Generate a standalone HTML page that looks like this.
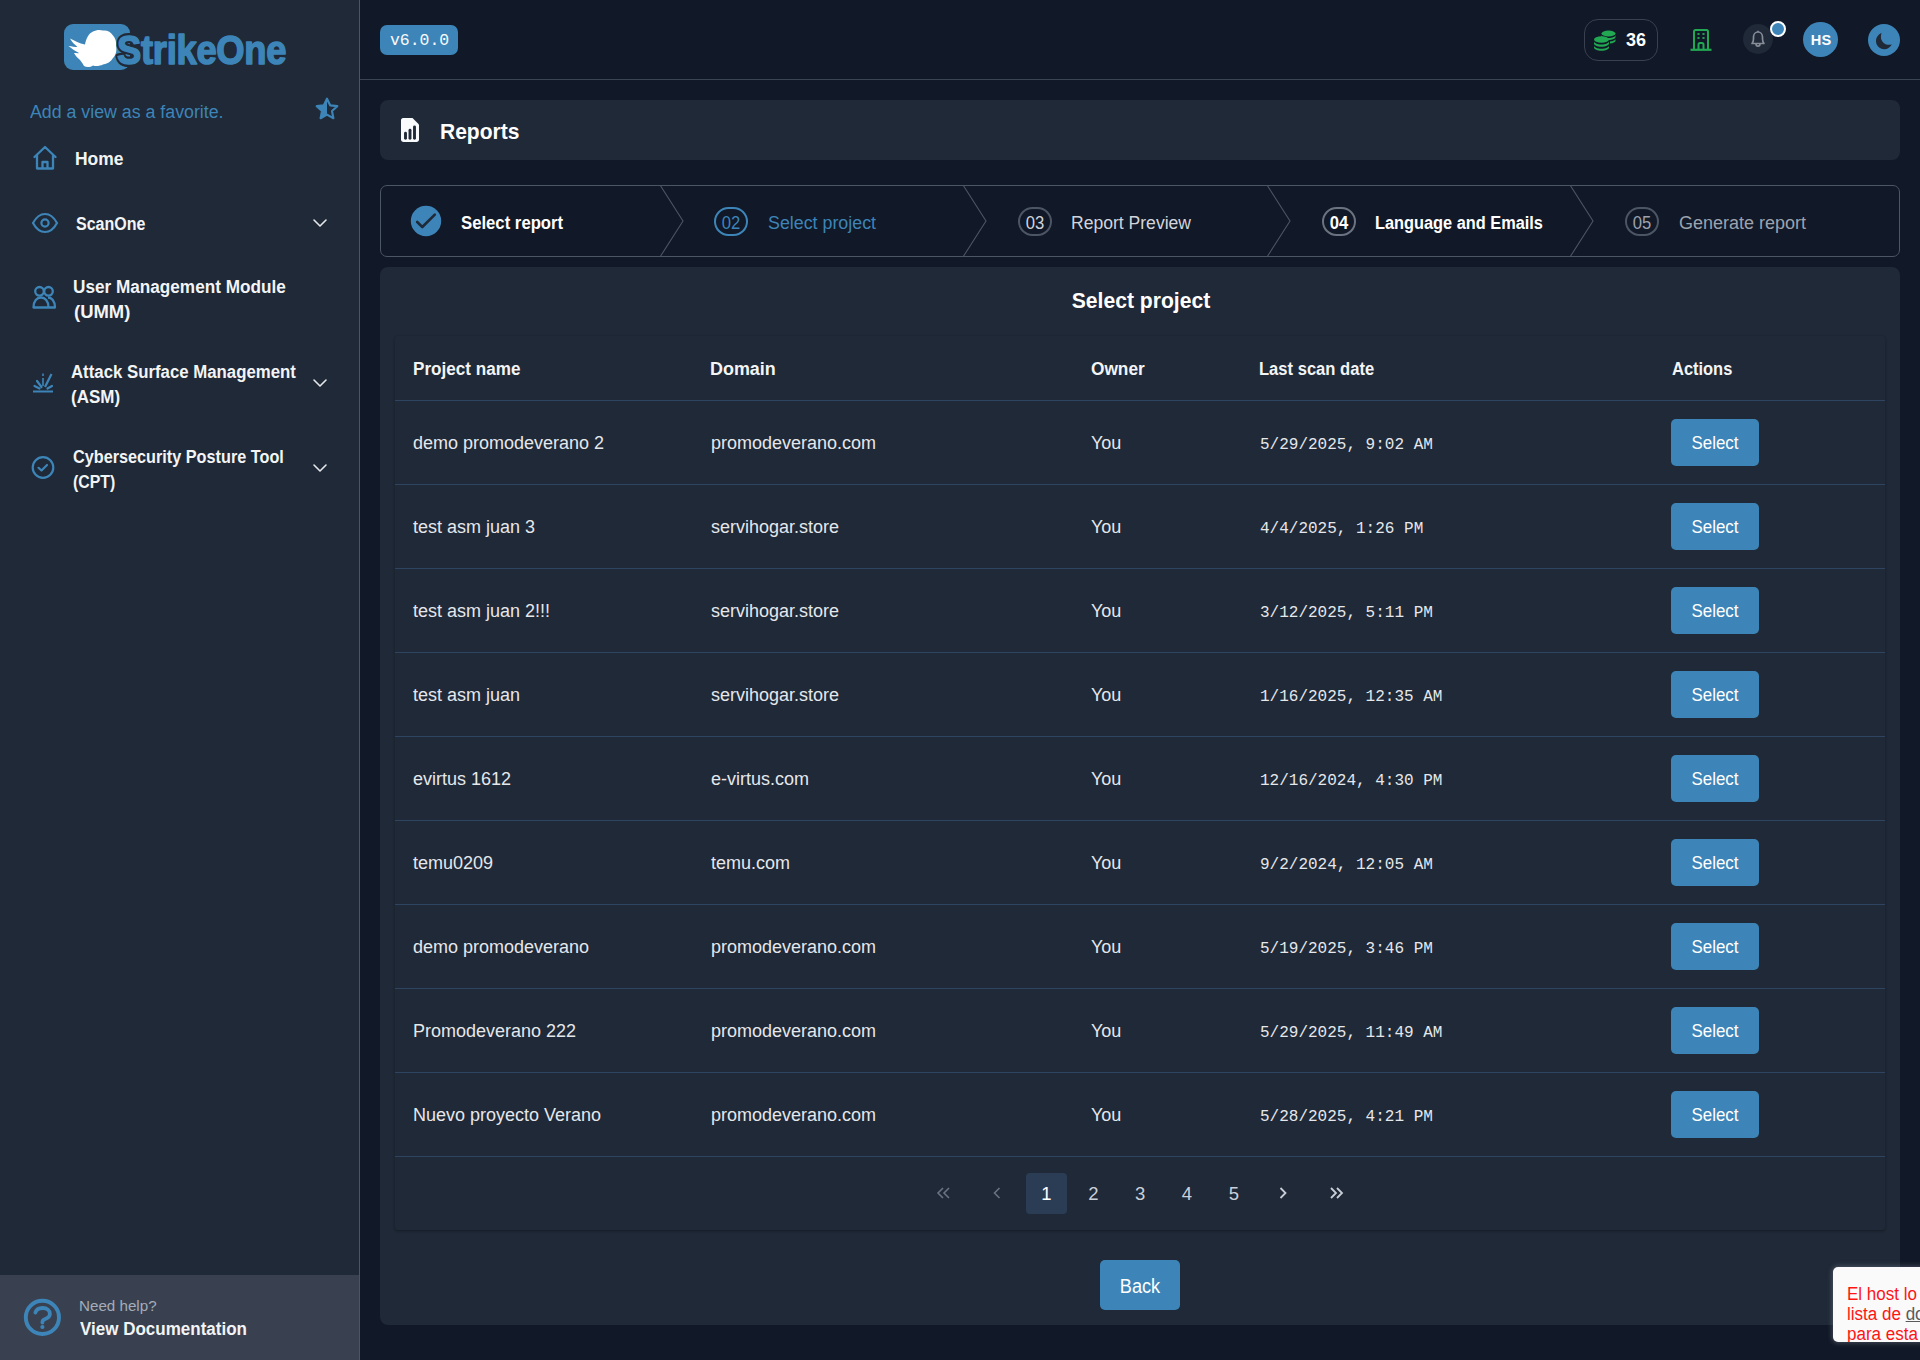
<!DOCTYPE html><html><head><meta charset="utf-8"><title>StrikeOne Reports</title><style>
html,body{margin:0;padding:0;}
body{width:1920px;height:1360px;overflow:hidden;background:#111827;position:relative;font-family:"Liberation Sans",sans-serif;}
.t{position:absolute;white-space:nowrap;}
.b{position:absolute;box-sizing:border-box;}
</style></head><body>
<div class="b" style="left:0px;top:0px;width:360px;height:1360px;background:#1f2937;border-right:1px solid #4b5563;"></div>
<svg class="b" style="left:60px;top:18px;" width="235" height="60" viewBox="0 0 235 60">
<rect x="4" y="6" width="66" height="46" rx="9" fill="#3d85b8"/>
<path d="M10 20.5 C15 23 19 25.5 25 26.5 C26 21 28.5 15.5 33 13.5 C36 11.8 40 11.5 43 12.5 C47 12 51 14 53 17.5 C55.5 20 56.5 24 56 28 C57 32 56 37 53 40 C51 43.5 47 46 43 46.5 C40 48 36 48.5 33 47.5 C30 49.5 26.5 49.5 24 48 C22.5 45 21 43 19 41 C17 39.5 15 37 14 35 C16 35 18 35.5 19 35 C15.5 33 12 31 8.5 28 C12 28.5 15 29 17.5 29 C14.5 26.5 12 24 10 20.5 Z" fill="#fff"/>
<g transform="translate(57 0) scale(0.875 1) translate(-57 0)" font-family="Liberation Sans" font-weight="700" font-size="41.5" letter-spacing="-0.3">
<text x="57" y="45.8" fill="#3d85b8" stroke="#1f2937" stroke-width="6" stroke-linejoin="round">StrikeOne</text>
<text x="57" y="45.8" fill="#3d85b8" stroke="#3d85b8" stroke-width="1.6" stroke-linejoin="round">StrikeOne</text>
</g>
</svg>
<div class="t" style="left:30.00px;top:92px;font-size:18px;line-height:40px;font-weight:400;color:#3d85b8;font-family:'Liberation Sans', sans-serif;transform:scaleX(0.9867);transform-origin:0 0;">Add a view as a favorite.</div>
<svg class="b" style="left:314px;top:96px;" width="26" height="26" viewBox="0 0 24 24"><path d="M12 2.5 L14.9 8.6 L21.5 9.4 L16.6 13.9 L17.9 20.5 L12 17.2 L6.1 20.5 L7.4 13.9 L2.5 9.4 L9.1 8.6 Z" fill="none" stroke="#3d85b8" stroke-width="2" stroke-linejoin="round"/><path d="M12 2.5 L9.1 8.6 L2.5 9.4 L7.4 13.9 L6.1 20.5 L12 17.2 Z" fill="#3d85b8"/></svg>
<svg class="b" style="left:31px;top:144px;" width="28" height="28" viewBox="0 0 28 28"><path d="M3.5 13 L14 3 L24.5 13 M6 11 V24.5 H22 V11 M11.5 24.5 V18 H16.5 V24.5" fill="none" stroke="#3d85b8" stroke-width="2.3" stroke-linejoin="round" stroke-linecap="round"/></svg>
<div class="t" style="left:74.73px;top:139px;font-size:18px;line-height:40px;font-weight:700;color:#f3f4f6;font-family:'Liberation Sans', sans-serif;transform:scaleX(0.9694);transform-origin:0 0;">Home</div>
<svg class="b" style="left:31px;top:211px;" width="28" height="24" viewBox="0 0 28 24"><path d="M2 12 C5.5 5.5 9.5 3 14 3 C18.5 3 22.5 5.5 26 12 C22.5 18.5 18.5 21 14 21 C9.5 21 5.5 18.5 2 12 Z" fill="none" stroke="#3d85b8" stroke-width="2.2"/><circle cx="14" cy="12" r="3.6" fill="none" stroke="#3d85b8" stroke-width="2.2"/></svg>
<div class="t" style="left:75.70px;top:204px;font-size:18px;line-height:40px;font-weight:700;color:#f3f4f6;font-family:'Liberation Sans', sans-serif;transform:scaleX(0.8908);transform-origin:0 0;">ScanOne</div>
<svg class="b" style="left:312px;top:217.7px;" width="16" height="10" viewBox="0 0 16 10"><path d="M2 2 L8 8 L14 2" fill="none" stroke="#e5e7eb" stroke-width="1.6" stroke-linecap="round" stroke-linejoin="round"/></svg>
<svg class="b" style="left:30px;top:283px;" width="28" height="28" viewBox="0 0 28 28"><circle cx="9.5" cy="8.3" r="4.3" fill="none" stroke="#3d85b8" stroke-width="2.3"/><circle cx="18.5" cy="8.3" r="4.3" fill="none" stroke="#3d85b8" stroke-width="2.3"/><path d="M3.5 24.5 C3.5 18 7 14.5 11 14.5 C15 14.5 18.5 18 18.5 24.5 Z M18 14.5 C21.5 14.5 25 18 25 24.5 H18.5" fill="none" stroke="#3d85b8" stroke-width="2.3" stroke-linejoin="round"/></svg>
<div class="t" style="left:72.77px;top:267px;font-size:17.5px;line-height:40px;font-weight:700;color:#f3f4f6;font-family:'Liberation Sans', sans-serif;transform:scaleX(0.9810);transform-origin:0 0;">User Management Module</div>
<div class="t" style="left:73.75px;top:292px;font-size:17.5px;line-height:40px;font-weight:700;color:#f3f4f6;font-family:'Liberation Sans', sans-serif;transform:scaleX(1.0547);transform-origin:0 0;">(UMM)</div>
<svg class="b" style="left:31px;top:372px;" width="24" height="21" viewBox="0 0 24 21"><path d="M2 19.5 H22" stroke="#3d85b8" stroke-width="2"/><path d="M12 1.5 V4 M12 6 V14" stroke="#3d85b8" stroke-width="1.6"/><path d="M20.5 2 L14 15" stroke="#3d85b8" stroke-width="2.2"/><path d="M6 9 L10.5 15 M3.5 14 L8.5 16.5 M16.5 16.5 L21 14" stroke="#3d85b8" stroke-width="2.2" stroke-linecap="round"/></svg>
<div class="t" style="left:71.25px;top:352px;font-size:17.5px;line-height:40px;font-weight:700;color:#f3f4f6;font-family:'Liberation Sans', sans-serif;transform:scaleX(0.9593);transform-origin:0 0;">Attack Surface Management</div>
<div class="t" style="left:71.25px;top:377px;font-size:17.5px;line-height:40px;font-weight:700;color:#f3f4f6;font-family:'Liberation Sans', sans-serif;transform:scaleX(0.9705);transform-origin:0 0;">(ASM)</div>
<svg class="b" style="left:312px;top:377.7px;" width="16" height="10" viewBox="0 0 16 10"><path d="M2 2 L8 8 L14 2" fill="none" stroke="#e5e7eb" stroke-width="1.6" stroke-linecap="round" stroke-linejoin="round"/></svg>
<svg class="b" style="left:30px;top:455px;" width="26" height="26" viewBox="0 0 26 26"><circle cx="13" cy="12.5" r="10.3" fill="none" stroke="#3d85b8" stroke-width="2.2"/><path d="M8.5 12.8 L11.5 15.5 L17 10" fill="none" stroke="#3d85b8" stroke-width="2.2" stroke-linecap="round" stroke-linejoin="round"/></svg>
<div class="t" style="left:73.00px;top:437px;font-size:17.5px;line-height:40px;font-weight:700;color:#f3f4f6;font-family:'Liberation Sans', sans-serif;transform:scaleX(0.9277);transform-origin:0 0;">Cybersecurity Posture Tool</div>
<div class="t" style="left:73.00px;top:462px;font-size:17.5px;line-height:40px;font-weight:700;color:#f3f4f6;font-family:'Liberation Sans', sans-serif;transform:scaleX(0.9056);transform-origin:0 0;">(CPT)</div>
<svg class="b" style="left:312px;top:462.7px;" width="16" height="10" viewBox="0 0 16 10"><path d="M2 2 L8 8 L14 2" fill="none" stroke="#e5e7eb" stroke-width="1.6" stroke-linecap="round" stroke-linejoin="round"/></svg>
<div class="b" style="left:0px;top:1275px;width:359px;height:85px;background:#394150;"></div>
<svg class="b" style="left:22px;top:1297px;" width="41" height="41" viewBox="0 0 41 41"><circle cx="20.4" cy="20.4" r="16.6" fill="none" stroke="#3d85b8" stroke-width="3.9"/><path d="M13.4 15.6 C14.2 12.6 17 11 20.6 11 C25 11 27.9 13.6 27.9 17 C27.9 20.4 24.6 21.6 22.2 22.5 C20.9 23 20.4 24 20.4 25.6" fill="none" stroke="#3d85b8" stroke-width="3.8" stroke-linecap="round"/><circle cx="20.4" cy="30" r="2.1" fill="#3d85b8"/></svg>
<div class="t" style="left:79.02px;top:1286px;font-size:15.5px;line-height:40px;font-weight:400;color:#a5acb8;font-family:'Liberation Sans', sans-serif;transform:scaleX(0.9788);transform-origin:0 0;">Need help?</div>
<div class="t" style="left:80.00px;top:1309px;font-size:18px;line-height:40px;font-weight:700;color:#f3f4f6;font-family:'Liberation Sans', sans-serif;transform:scaleX(0.9448);transform-origin:0 0;">View Documentation</div>
<div class="b" style="left:360px;top:0px;width:1560px;height:80px;border-bottom:1px solid #3b4452;"></div>
<div class="b" style="left:380px;top:25px;width:78px;height:30px;background:#3d85b8;border-radius:7px;"></div>
<div class="t" style="left:390.00px;top:21px;font-size:16px;line-height:40px;font-weight:400;color:#f9fafb;font-family:'Liberation Mono', monospace;transform:scaleX(1.0262);transform-origin:0 0;">v6.0.0</div>
<div class="b" style="left:1584px;top:19px;width:74px;height:42px;border:1px solid #394150;border-radius:14px;"></div>
<svg class="b" style="left:1593px;top:28px;" width="24" height="24" viewBox="0 0 24 24"><g fill="#22a852"><ellipse cx="15.5" cy="5.5" rx="7" ry="3"/><path d="M8.5 7 V9 C8.5 10.6 11.6 12 15.5 12 C19.4 12 22.5 10.6 22.5 9 V7 C22.5 8.6 19.4 10 15.5 10 C11.6 10 8.5 8.6 8.5 7Z"/><path d="M17 13.5 C19.6 13.2 22.5 12.2 22.5 11 V13 C22.5 14.2 20 15.2 17 15.5Z"/><ellipse cx="8.5" cy="11.5" rx="7.5" ry="3.3"/><path d="M1 13.3 V15.5 C1 17.3 4.4 18.8 8.5 18.8 C12.6 18.8 16 17.3 16 15.5 V13.3 C16 15.1 12.6 16.6 8.5 16.6 C4.4 16.6 1 15.1 1 13.3Z"/><path d="M1 17.5 V19.5 C1 21.3 4.4 22.8 8.5 22.8 C12.6 22.8 16 21.3 16 19.5 V17.5 C16 19.3 12.6 20.8 8.5 20.8 C4.4 20.8 1 19.3 1 17.5Z"/></g></svg>
<div class="t" style="left:1626.00px;top:20px;font-size:18px;line-height:40px;font-weight:700;color:#ffffff;font-family:'Liberation Sans', sans-serif;transform:scaleX(0.9995);transform-origin:0 0;">36</div>
<svg class="b" style="left:1689px;top:28px;" width="24" height="24" viewBox="0 0 24 24"><g fill="none" stroke="#22a852" stroke-width="2"><path d="M5 22 V3.5 C5 2.7 5.6 2 6.5 2 H17.5 C18.4 2 19 2.7 19 3.5 V22"/><path d="M1.5 21.8 H22.5" stroke-width="2.2"/><path d="M9.5 22 V16.5 C9.5 15.7 10.2 15 11 15 H13 C13.8 15 14.5 15.7 14.5 16.5 V22"/></g><g fill="#22a852"><ellipse cx="9.5" cy="6" rx="1.3" ry="0.9"/><ellipse cx="14.5" cy="6" rx="1.3" ry="0.9"/><ellipse cx="9.5" cy="10" rx="1.3" ry="0.9"/><ellipse cx="14.5" cy="10" rx="1.3" ry="0.9"/></g></svg>
<div class="b" style="left:1743px;top:24px;width:30px;height:30px;background:#1f2937;border-radius:50%;"></div>
<svg class="b" style="left:1748px;top:29px;" width="20" height="20" viewBox="0 0 20 20"><path d="M4 14.5 C5 13.5 5.5 12 5.5 10 V8 C5.5 5.3 7.5 3 10 3 C12.5 3 14.5 5.3 14.5 8 V10 C14.5 12 15 13.5 16 14.5 Z M8 14.8 C8 16.2 8.9 17.2 10 17.2 C11.1 17.2 12 16.2 12 14.8 M10 1.8 V3" fill="none" stroke="#868c98" stroke-width="1.7" stroke-linejoin="round"/></svg>
<div class="b" style="left:1770px;top:21px;width:16px;height:16px;background:#3d85b8;border:2.5px solid #ffffff;border-radius:50%;"></div>
<div class="b" style="left:1803px;top:22px;width:35px;height:35px;background:#3d85b8;border-radius:50%;"></div>
<div class="t" style="left:1620.7px;width:400px;text-align:center;top:20px;font-size:15.5px;line-height:40px;font-weight:700;color:#ffffff;font-family:'Liberation Sans', sans-serif;transform:scaleX(0.9409);transform-origin:50% 0;">HS</div>
<div class="b" style="left:1868px;top:24px;width:32px;height:32px;background:#3d85b8;border-radius:50%;"></div>
<svg class="b" style="left:1874px;top:30.5px;" width="20" height="20" viewBox="0 0 20 20"><path d="M7.5 2 C4.3 3.3 2 6.4 2 10 C2 14.6 5.6 18.2 10.2 18.2 C13.6 18.2 16.5 16.1 17.8 13.2 C16.8 13.6 15.8 13.8 14.7 13.8 C10.4 13.8 6.9 10.3 6.9 6 C6.9 4.6 7.1 3.2 7.5 2 Z" fill="#1f2937"/></svg>
<div class="b" style="left:380px;top:100px;width:1520px;height:60px;background:#1f2937;border-radius:8px;"></div>
<svg class="b" style="left:400px;top:117px;" width="20" height="26" viewBox="0 0 20 26"><path d="M3 1 H12.5 L19 7.5 V22.5 C19 24 18 25 16.5 25 H3.5 C2 25 1 24 1 22.5 V3 C1 2 2 1 3 1 Z" fill="#f8fafc"/><g stroke="#1f2937" stroke-width="2.9" stroke-linecap="round"><path d="M5.5 16.2 V21.2"/><path d="M10 13.2 V21.2"/><path d="M14.5 10 V21.2"/></g></svg>
<div class="t" style="left:440.32px;top:112px;font-size:22.5px;line-height:40px;font-weight:700;color:#ffffff;font-family:'Liberation Sans', sans-serif;transform:scaleX(0.9341);transform-origin:0 0;">Reports</div>
<div class="b" style="left:380px;top:185px;width:1520px;height:72px;border:1px solid #4b5563;border-radius:7px;"></div>
<svg class="b" style="left:380px;top:185px;" width="1520" height="72" viewBox="0 0 1520 72"><path d="M280 0 L303 36 L280 72" fill="none" stroke="#4b5563" stroke-width="1.1"/><path d="M583 0 L606 36 L583 72" fill="none" stroke="#4b5563" stroke-width="1.1"/><path d="M887 0 L910 36 L887 72" fill="none" stroke="#4b5563" stroke-width="1.1"/><path d="M1190 0 L1213 36 L1190 72" fill="none" stroke="#4b5563" stroke-width="1.1"/></svg>
<svg class="b" style="left:410px;top:205px;" width="32" height="32" viewBox="0 0 32 32"><circle cx="16" cy="16" r="15.2" fill="#3d85b8"/><path d="M7.2 17 L12.3 22 L24.8 9.6" fill="none" stroke="#1f2937" stroke-width="2.6" stroke-linecap="round" stroke-linejoin="round"/></svg>
<div class="t" style="left:461.00px;top:203px;font-size:18.5px;line-height:40px;font-weight:700;color:#ffffff;font-family:'Liberation Sans', sans-serif;transform:scaleX(0.9032);transform-origin:0 0;">Select report</div>
<div class="b" style="left:714px;top:207px;width:34px;height:29px;border:2px solid #3d85b8;border-radius:14.5px;"></div>
<div class="t" style="left:531px;width:400px;text-align:center;top:203px;font-size:18px;line-height:40px;font-weight:400;color:#3d85b8;font-family:'Liberation Sans', sans-serif;transform:scaleX(0.9245);transform-origin:50% 0;">02</div>
<div class="t" style="left:768.30px;top:203px;font-size:18px;line-height:40px;font-weight:400;color:#3d85b8;font-family:'Liberation Sans', sans-serif;transform:scaleX(0.9903);transform-origin:0 0;">Select project</div>
<div class="b" style="left:1018px;top:207px;width:34px;height:29px;border:2px solid #4b5563;border-radius:14.5px;"></div>
<div class="t" style="left:835px;width:400px;text-align:center;top:203px;font-size:18px;line-height:40px;font-weight:400;color:#d1d5db;font-family:'Liberation Sans', sans-serif;transform:scaleX(0.9245);transform-origin:50% 0;">03</div>
<div class="t" style="left:1071.02px;top:203px;font-size:18px;line-height:40px;font-weight:400;color:#d1d5db;font-family:'Liberation Sans', sans-serif;transform:scaleX(0.9752);transform-origin:0 0;">Report Preview</div>
<div class="b" style="left:1322px;top:207px;width:34px;height:29px;border:2px solid #6b7280;border-radius:14.5px;"></div>
<div class="t" style="left:1139px;width:400px;text-align:center;top:203px;font-size:18px;line-height:40px;font-weight:700;color:#ffffff;font-family:'Liberation Sans', sans-serif;transform:scaleX(0.9245);transform-origin:50% 0;">04</div>
<div class="t" style="left:1375.09px;top:203px;font-size:18px;line-height:40px;font-weight:700;color:#ffffff;font-family:'Liberation Sans', sans-serif;transform:scaleX(0.9074);transform-origin:0 0;">Language and Emails</div>
<div class="b" style="left:1625px;top:207px;width:34px;height:29px;border:2px solid #4b5563;border-radius:14.5px;"></div>
<div class="t" style="left:1442px;width:400px;text-align:center;top:203px;font-size:18px;line-height:40px;font-weight:400;color:#9ca3af;font-family:'Liberation Sans', sans-serif;transform:scaleX(0.9245);transform-origin:50% 0;">05</div>
<div class="t" style="left:1679.00px;top:203px;font-size:18px;line-height:40px;font-weight:400;color:#9ca3af;font-family:'Liberation Sans', sans-serif;transform:scaleX(0.9994);transform-origin:0 0;">Generate report</div>
<div class="b" style="left:380px;top:267px;width:1520px;height:1058px;background:#1f2937;border-radius:8px;"></div>
<div class="t" style="left:940.5px;width:400px;text-align:center;top:281px;font-size:22.5px;line-height:40px;font-weight:700;color:#ffffff;font-family:'Liberation Sans', sans-serif;transform:scaleX(0.9388);transform-origin:50% 0;">Select project</div>
<div class="b" style="left:395px;top:336px;width:1490px;height:894px;background:#1f2937;box-shadow:0 1px 3px rgba(0,0,0,0.22),0 1px 2px rgba(0,0,0,0.12);border-radius:3px;"></div>
<div class="t" style="left:412.55px;top:349px;font-size:18px;line-height:40px;font-weight:700;color:#f3f4f6;font-family:'Liberation Sans', sans-serif;transform:scaleX(0.9506);transform-origin:0 0;">Project name</div>
<div class="t" style="left:710.25px;top:349px;font-size:18px;line-height:40px;font-weight:700;color:#f3f4f6;font-family:'Liberation Sans', sans-serif;transform:scaleX(0.9959);transform-origin:0 0;">Domain</div>
<div class="t" style="left:1090.75px;top:349px;font-size:18px;line-height:40px;font-weight:700;color:#f3f4f6;font-family:'Liberation Sans', sans-serif;transform:scaleX(0.9597);transform-origin:0 0;">Owner</div>
<div class="t" style="left:1259.28px;top:349px;font-size:18px;line-height:40px;font-weight:700;color:#f3f4f6;font-family:'Liberation Sans', sans-serif;transform:scaleX(0.9207);transform-origin:0 0;">Last scan date</div>
<div class="t" style="left:1671.70px;top:349px;font-size:18px;line-height:40px;font-weight:700;color:#f3f4f6;font-family:'Liberation Sans', sans-serif;transform:scaleX(0.9137);transform-origin:0 0;">Actions</div>
<div class="b" style="left:395px;top:400px;width:1490px;height:1px;background:#2e4461;"></div>
<div class="b" style="left:395px;top:484px;width:1490px;height:1px;background:#2e4461;"></div>
<div class="b" style="left:395px;top:568px;width:1490px;height:1px;background:#2e4461;"></div>
<div class="b" style="left:395px;top:652px;width:1490px;height:1px;background:#2e4461;"></div>
<div class="b" style="left:395px;top:736px;width:1490px;height:1px;background:#2e4461;"></div>
<div class="b" style="left:395px;top:820px;width:1490px;height:1px;background:#2e4461;"></div>
<div class="b" style="left:395px;top:904px;width:1490px;height:1px;background:#2e4461;"></div>
<div class="b" style="left:395px;top:988px;width:1490px;height:1px;background:#2e4461;"></div>
<div class="b" style="left:395px;top:1072px;width:1490px;height:1px;background:#2e4461;"></div>
<div class="b" style="left:395px;top:1156px;width:1490px;height:1px;background:#2e4461;"></div>
<div class="t" style="left:413px;top:423px;font-size:18px;line-height:40px;font-weight:400;color:#e5e7eb;font-family:'Liberation Sans', sans-serif;">demo promodeverano 2</div>
<div class="t" style="left:711px;top:423px;font-size:18px;line-height:40px;font-weight:400;color:#e5e7eb;font-family:'Liberation Sans', sans-serif;">promodeverano.com</div>
<div class="t" style="left:1091px;top:423px;font-size:18px;line-height:40px;font-weight:400;color:#e5e7eb;font-family:'Liberation Sans', sans-serif;">You</div>
<div class="t" style="left:1260px;top:425px;font-size:16px;line-height:40px;font-weight:400;color:#e5e7eb;font-family:'Liberation Mono', monospace;">5/29/2025, 9:02 AM</div>
<div class="b" style="left:1671px;top:419px;width:88px;height:47px;background:#3d85b8;border-radius:5px;"></div>
<div class="t" style="left:1515.4px;width:400px;text-align:center;top:423px;font-size:18px;line-height:40px;font-weight:400;color:#ffffff;font-family:'Liberation Sans', sans-serif;transform:scaleX(0.9395);transform-origin:50% 0;">Select</div>
<div class="t" style="left:413px;top:507px;font-size:18px;line-height:40px;font-weight:400;color:#e5e7eb;font-family:'Liberation Sans', sans-serif;">test asm juan 3</div>
<div class="t" style="left:711px;top:507px;font-size:18px;line-height:40px;font-weight:400;color:#e5e7eb;font-family:'Liberation Sans', sans-serif;">servihogar.store</div>
<div class="t" style="left:1091px;top:507px;font-size:18px;line-height:40px;font-weight:400;color:#e5e7eb;font-family:'Liberation Sans', sans-serif;">You</div>
<div class="t" style="left:1260px;top:509px;font-size:16px;line-height:40px;font-weight:400;color:#e5e7eb;font-family:'Liberation Mono', monospace;">4/4/2025, 1:26 PM</div>
<div class="b" style="left:1671px;top:503px;width:88px;height:47px;background:#3d85b8;border-radius:5px;"></div>
<div class="t" style="left:1515.4px;width:400px;text-align:center;top:507px;font-size:18px;line-height:40px;font-weight:400;color:#ffffff;font-family:'Liberation Sans', sans-serif;transform:scaleX(0.9395);transform-origin:50% 0;">Select</div>
<div class="t" style="left:413px;top:591px;font-size:18px;line-height:40px;font-weight:400;color:#e5e7eb;font-family:'Liberation Sans', sans-serif;">test asm juan 2!!!</div>
<div class="t" style="left:711px;top:591px;font-size:18px;line-height:40px;font-weight:400;color:#e5e7eb;font-family:'Liberation Sans', sans-serif;">servihogar.store</div>
<div class="t" style="left:1091px;top:591px;font-size:18px;line-height:40px;font-weight:400;color:#e5e7eb;font-family:'Liberation Sans', sans-serif;">You</div>
<div class="t" style="left:1260px;top:593px;font-size:16px;line-height:40px;font-weight:400;color:#e5e7eb;font-family:'Liberation Mono', monospace;">3/12/2025, 5:11 PM</div>
<div class="b" style="left:1671px;top:587px;width:88px;height:47px;background:#3d85b8;border-radius:5px;"></div>
<div class="t" style="left:1515.4px;width:400px;text-align:center;top:591px;font-size:18px;line-height:40px;font-weight:400;color:#ffffff;font-family:'Liberation Sans', sans-serif;transform:scaleX(0.9395);transform-origin:50% 0;">Select</div>
<div class="t" style="left:413px;top:675px;font-size:18px;line-height:40px;font-weight:400;color:#e5e7eb;font-family:'Liberation Sans', sans-serif;">test asm juan</div>
<div class="t" style="left:711px;top:675px;font-size:18px;line-height:40px;font-weight:400;color:#e5e7eb;font-family:'Liberation Sans', sans-serif;">servihogar.store</div>
<div class="t" style="left:1091px;top:675px;font-size:18px;line-height:40px;font-weight:400;color:#e5e7eb;font-family:'Liberation Sans', sans-serif;">You</div>
<div class="t" style="left:1260px;top:677px;font-size:16px;line-height:40px;font-weight:400;color:#e5e7eb;font-family:'Liberation Mono', monospace;">1/16/2025, 12:35 AM</div>
<div class="b" style="left:1671px;top:671px;width:88px;height:47px;background:#3d85b8;border-radius:5px;"></div>
<div class="t" style="left:1515.4px;width:400px;text-align:center;top:675px;font-size:18px;line-height:40px;font-weight:400;color:#ffffff;font-family:'Liberation Sans', sans-serif;transform:scaleX(0.9395);transform-origin:50% 0;">Select</div>
<div class="t" style="left:413px;top:759px;font-size:18px;line-height:40px;font-weight:400;color:#e5e7eb;font-family:'Liberation Sans', sans-serif;">evirtus 1612</div>
<div class="t" style="left:711px;top:759px;font-size:18px;line-height:40px;font-weight:400;color:#e5e7eb;font-family:'Liberation Sans', sans-serif;">e-virtus.com</div>
<div class="t" style="left:1091px;top:759px;font-size:18px;line-height:40px;font-weight:400;color:#e5e7eb;font-family:'Liberation Sans', sans-serif;">You</div>
<div class="t" style="left:1260px;top:761px;font-size:16px;line-height:40px;font-weight:400;color:#e5e7eb;font-family:'Liberation Mono', monospace;">12/16/2024, 4:30 PM</div>
<div class="b" style="left:1671px;top:755px;width:88px;height:47px;background:#3d85b8;border-radius:5px;"></div>
<div class="t" style="left:1515.4px;width:400px;text-align:center;top:759px;font-size:18px;line-height:40px;font-weight:400;color:#ffffff;font-family:'Liberation Sans', sans-serif;transform:scaleX(0.9395);transform-origin:50% 0;">Select</div>
<div class="t" style="left:413px;top:843px;font-size:18px;line-height:40px;font-weight:400;color:#e5e7eb;font-family:'Liberation Sans', sans-serif;">temu0209</div>
<div class="t" style="left:711px;top:843px;font-size:18px;line-height:40px;font-weight:400;color:#e5e7eb;font-family:'Liberation Sans', sans-serif;">temu.com</div>
<div class="t" style="left:1091px;top:843px;font-size:18px;line-height:40px;font-weight:400;color:#e5e7eb;font-family:'Liberation Sans', sans-serif;">You</div>
<div class="t" style="left:1260px;top:845px;font-size:16px;line-height:40px;font-weight:400;color:#e5e7eb;font-family:'Liberation Mono', monospace;">9/2/2024, 12:05 AM</div>
<div class="b" style="left:1671px;top:839px;width:88px;height:47px;background:#3d85b8;border-radius:5px;"></div>
<div class="t" style="left:1515.4px;width:400px;text-align:center;top:843px;font-size:18px;line-height:40px;font-weight:400;color:#ffffff;font-family:'Liberation Sans', sans-serif;transform:scaleX(0.9395);transform-origin:50% 0;">Select</div>
<div class="t" style="left:413px;top:927px;font-size:18px;line-height:40px;font-weight:400;color:#e5e7eb;font-family:'Liberation Sans', sans-serif;">demo promodeverano</div>
<div class="t" style="left:711px;top:927px;font-size:18px;line-height:40px;font-weight:400;color:#e5e7eb;font-family:'Liberation Sans', sans-serif;">promodeverano.com</div>
<div class="t" style="left:1091px;top:927px;font-size:18px;line-height:40px;font-weight:400;color:#e5e7eb;font-family:'Liberation Sans', sans-serif;">You</div>
<div class="t" style="left:1260px;top:929px;font-size:16px;line-height:40px;font-weight:400;color:#e5e7eb;font-family:'Liberation Mono', monospace;">5/19/2025, 3:46 PM</div>
<div class="b" style="left:1671px;top:923px;width:88px;height:47px;background:#3d85b8;border-radius:5px;"></div>
<div class="t" style="left:1515.4px;width:400px;text-align:center;top:927px;font-size:18px;line-height:40px;font-weight:400;color:#ffffff;font-family:'Liberation Sans', sans-serif;transform:scaleX(0.9395);transform-origin:50% 0;">Select</div>
<div class="t" style="left:413px;top:1011px;font-size:18px;line-height:40px;font-weight:400;color:#e5e7eb;font-family:'Liberation Sans', sans-serif;">Promodeverano 222</div>
<div class="t" style="left:711px;top:1011px;font-size:18px;line-height:40px;font-weight:400;color:#e5e7eb;font-family:'Liberation Sans', sans-serif;">promodeverano.com</div>
<div class="t" style="left:1091px;top:1011px;font-size:18px;line-height:40px;font-weight:400;color:#e5e7eb;font-family:'Liberation Sans', sans-serif;">You</div>
<div class="t" style="left:1260px;top:1013px;font-size:16px;line-height:40px;font-weight:400;color:#e5e7eb;font-family:'Liberation Mono', monospace;">5/29/2025, 11:49 AM</div>
<div class="b" style="left:1671px;top:1007px;width:88px;height:47px;background:#3d85b8;border-radius:5px;"></div>
<div class="t" style="left:1515.4px;width:400px;text-align:center;top:1011px;font-size:18px;line-height:40px;font-weight:400;color:#ffffff;font-family:'Liberation Sans', sans-serif;transform:scaleX(0.9395);transform-origin:50% 0;">Select</div>
<div class="t" style="left:413px;top:1095px;font-size:18px;line-height:40px;font-weight:400;color:#e5e7eb;font-family:'Liberation Sans', sans-serif;">Nuevo proyecto Verano</div>
<div class="t" style="left:711px;top:1095px;font-size:18px;line-height:40px;font-weight:400;color:#e5e7eb;font-family:'Liberation Sans', sans-serif;">promodeverano.com</div>
<div class="t" style="left:1091px;top:1095px;font-size:18px;line-height:40px;font-weight:400;color:#e5e7eb;font-family:'Liberation Sans', sans-serif;">You</div>
<div class="t" style="left:1260px;top:1097px;font-size:16px;line-height:40px;font-weight:400;color:#e5e7eb;font-family:'Liberation Mono', monospace;">5/28/2025, 4:21 PM</div>
<div class="b" style="left:1671px;top:1091px;width:88px;height:47px;background:#3d85b8;border-radius:5px;"></div>
<div class="t" style="left:1515.4px;width:400px;text-align:center;top:1095px;font-size:18px;line-height:40px;font-weight:400;color:#ffffff;font-family:'Liberation Sans', sans-serif;transform:scaleX(0.9395);transform-origin:50% 0;">Select</div>
<div class="b" style="left:1026px;top:1173px;width:41px;height:41px;background:#2b3d55;border-radius:4px;"></div>
<svg class="b" style="left:934px;top:1185px;" width="20" height="16" viewBox="0 0 20 16"><path d="M9 3 L4 8 L9 13 M15 3 L10 8 L15 13" fill="none" stroke="#6b7280" stroke-width="1.6"/></svg>
<svg class="b" style="left:990px;top:1185px;" width="14" height="16" viewBox="0 0 14 16"><path d="M9.5 3 L4.5 8 L9.5 13" fill="none" stroke="#6b7280" stroke-width="1.6"/></svg>
<div class="t" style="left:846.5px;width:400px;text-align:center;top:1174px;font-size:18.5px;line-height:40px;font-weight:400;color:#ffffff;font-family:'Liberation Sans', sans-serif;">1</div>
<div class="t" style="left:893.3px;width:400px;text-align:center;top:1174px;font-size:18.5px;line-height:40px;font-weight:400;color:#cbd0d8;font-family:'Liberation Sans', sans-serif;">2</div>
<div class="t" style="left:940.2px;width:400px;text-align:center;top:1174px;font-size:18.5px;line-height:40px;font-weight:400;color:#cbd0d8;font-family:'Liberation Sans', sans-serif;">3</div>
<div class="t" style="left:987px;width:400px;text-align:center;top:1174px;font-size:18.5px;line-height:40px;font-weight:400;color:#cbd0d8;font-family:'Liberation Sans', sans-serif;">4</div>
<div class="t" style="left:1034px;width:400px;text-align:center;top:1174px;font-size:18.5px;line-height:40px;font-weight:400;color:#cbd0d8;font-family:'Liberation Sans', sans-serif;">5</div>
<svg class="b" style="left:1276px;top:1185px;" width="14" height="16" viewBox="0 0 14 16"><path d="M4.5 3 L9.5 8 L4.5 13" fill="none" stroke="#c9ced6" stroke-width="1.8"/></svg>
<svg class="b" style="left:1326px;top:1185px;" width="20" height="16" viewBox="0 0 20 16"><path d="M5 3 L10 8 L5 13 M11 3 L16 8 L11 13" fill="none" stroke="#c9ced6" stroke-width="1.8"/></svg>
<div class="b" style="left:1100px;top:1260px;width:80px;height:50px;background:#3d85b8;border-radius:5px;"></div>
<div class="t" style="left:940.2px;width:400px;text-align:center;top:1266px;font-size:20px;line-height:40px;font-weight:400;color:#ffffff;font-family:'Liberation Sans', sans-serif;transform:scaleX(0.9086);transform-origin:50% 0;">Back</div>
<div class="b" style="left:1833px;top:1267px;width:100px;height:75px;background:#fafafa;border-radius:5px;box-shadow:0 0 5px 1px rgba(120,126,138,0.5);overflow:hidden;"><div class="t" style="left:14px;top:17px;font-size:18px;line-height:20px;color:#ff1414;font-family:'Liberation Sans',sans-serif;transform:scaleX(0.945);transform-origin:0 0;">El host lo<br>lista de <span style="color:#5a5a5a;text-decoration:underline;">do</span><br>para esta</div></div>
</body></html>
